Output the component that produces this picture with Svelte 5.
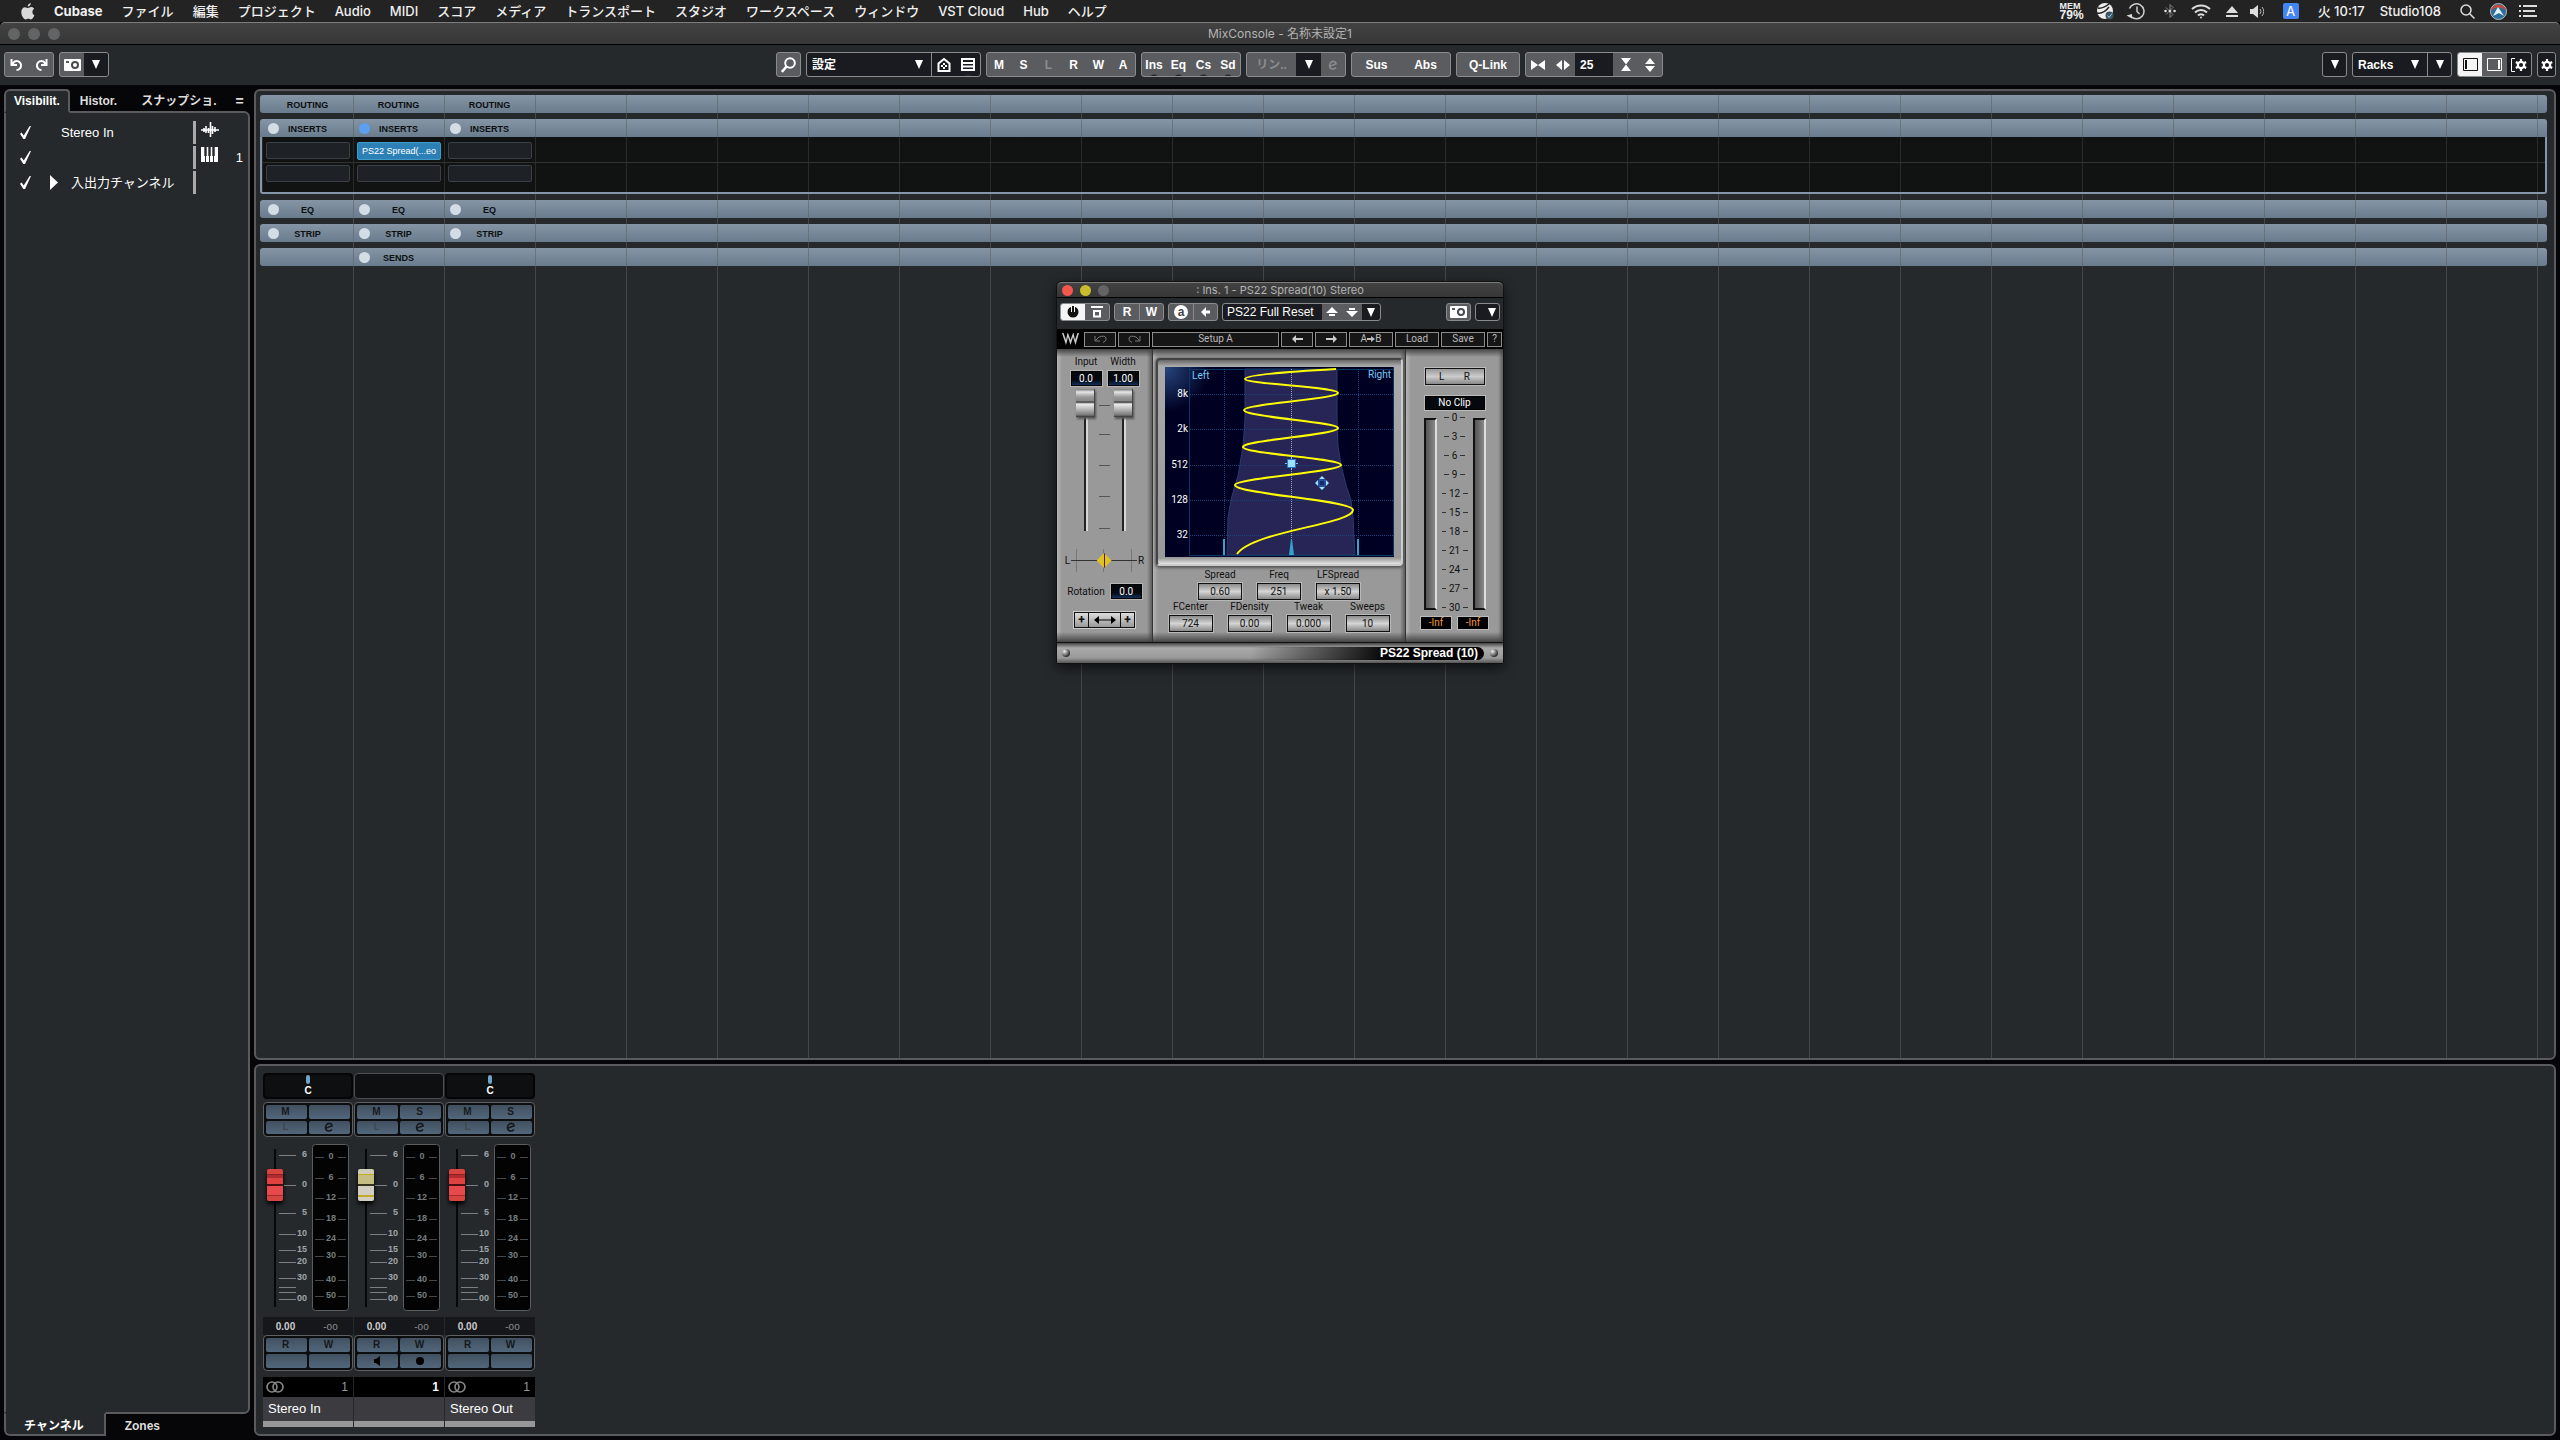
<script>
  const menus = [
    "ファイル", "編集", "プロジェクト", "Audio", "MIDI", "スコア", "メディア", "トランスポート",
    "スタジオ", "ワークスペース", "ウィンドウ", "VST Cloud", "Hub", "ヘルプ",
  ];

  // Rack rows above and below the insert slots
  const inserts = [{ on: false }, { on: true, plugin: "PS22 Spread(...eo" }, { on: false }];
  const racks = [
    { name: "EQ", channels: [0, 1, 2] },
    { name: "STRIP", channels: [0, 1, 2] },
    { name: "SENDS", channels: [1] },
  ];

  const channels = [
    { name: "Stereo In", pan: "C", solo: "", stereo: true, color: "red" },
    { name: "", pan: "", solo: "S", stereo: false, color: "cream", selected: true },
    { name: "Stereo Out", pan: "C", solo: "S", stereo: true, color: "red" },
  ];

  // Scale marks: label and distance from the top of the fader area
  const faderMarks = [["6", 10], ["0", 40], ["5", 68], ["10", 89], ["15", 105], ["20", 117], ["30", 133], ["00", 154]];
  const meterMarks = [["0", 12], ["6", 33], ["12", 53], ["18", 74], ["24", 94], ["30", 111], ["40", 135], ["50", 151]];
  const clipMarks = [0, 3, 6, 9, 12, 15, 18, 21, 24, 27, 30];

  const topParams = [["Spread", "0.60"], ["Freq", "251"], ["LFSpread", "x 1.50"]];
  const bottomParams = [["FCenter", "724"], ["FDensity", "0.00"], ["Tweak", "0.000"], ["Sweeps", "10"]];
  const freqs = [["8k", 27], ["2k", 62], ["512", 98], ["128", 133], ["32", 168]];

  let tab = $state("Visibilit.");
  let zone = $state("チャンネル");
</script>

{#snippet arrow()}
  <svg class="tri" viewBox="0 0 8 9"><path d="M0 0h8L4 9z" /></svg>
{/snippet}

{#snippet camera()}
  <svg width="17" height="12" viewBox="0 0 17 12">
    <rect width="17" height="12" rx="1" fill="#fff" />
    <rect x="2" y="2" width="3" height="2" fill="#5a5b5e" />
    <circle cx="11" cy="6" r="3" fill="none" stroke="#4a4b4e" stroke-width="2" />
  </svg>
{/snippet}

{#snippet gear()}
  <svg width="12" height="12" viewBox="0 0 14 14" fill="none" stroke="#fff">
    <circle cx="7" cy="7" r="3.700" stroke-width="2.600" />
    <path d="M7 0v3M7 11v3M1 3.500l2.500 1.500M10.500 9l2.500 1.500M1 10.500L3.500 9M10.500 5L13 3.500" stroke-width="2.600" />
  </svg>
{/snippet}

{#snippet edit()}
  <svg width="10" height="10" viewBox="0 0 11 11" fill="none" stroke="currentColor" stroke-width="1.700">
    <path d="M1.500 7L9 4.200C8.600 1 4.500.5 2.500 3.500S2 10 5 10c1.600 0 2.800-.6 3.800-1.800" />
  </svg>
{/snippet}

<div class="app">
  <header class="menubar">
    <button class="apple" aria-label="Apple">
      <svg width="14" height="17" viewBox="0 0 14 17" fill="#d8d8d8">
        <path d="M9.800 0c.1 1.800-1.400 3.500-3.100 3.500C6.500 1.800 8.200.2 9.800 0zM13.400 12.200c-.7 1.900-2 4.200-3.500 4.200-1 0-1.400-.6-2.600-.6s-1.700.6-2.600.6C2.700 16.400.3 12.500.3 9c0-3.100 1.900-4.800 3.800-4.800 1.200 0 2.100.8 2.900.8s1.800-.9 3.300-.9c1 0 2.200.6 2.900 1.600-2.600 1.600-2.200 5.300.2 6.500z" />
      </svg>
    </button>
    <button class="strong">Cubase</button>
    {#each menus as menu}
      <button>{menu}</button>
    {/each}
    <div class="status">
      <span class="mem"><small>MEM</small><b>79%</b></span>
      <svg width="18" height="18" viewBox="0 0 18 18">
        <circle cx="9" cy="9" r="8" fill="#eee" />
        <path d="M2 6c4 1 7-1 11-4M1 11c5 1 9-2 12-6" stroke="#222" stroke-width="1.500" fill="none" />
        <circle cx="13.500" cy="13.500" r="4" fill="#3b5361" />
        <path d="M11.500 13.500l1.500 2 3-4" stroke="#9fd0e8" fill="none" />
      </svg>
      <svg width="19" height="18" viewBox="0 0 19 18" fill="none" stroke="#cfcfcf" stroke-width="1.500">
        <path d="M3.500 6.500A7.500 7.500 0 1 1 5 14.500M11 4.500v5l2.500 2.500" />
        <path d="M.5 13.500l5.500-1.500v4.500z" fill="#ddd" stroke="none" />
      </svg>
      <svg class="gap-l" width="12" height="16" viewBox="0 0 12 16" fill="none" stroke="#888">
        <path d="M2 4.500l7 7L6 14.500v-13l3 3-7 7" />
        <g fill="#ddd" stroke="none"><circle cx="1.500" cy="8" r="1.300" /><circle cx="6" cy="8" r="1.300" /><circle cx="10.500" cy="8" r="1.300" /></g>
      </svg>
      <svg class="gap-m" width="20" height="15" viewBox="0 0 20 15" fill="none" stroke="#ddd" stroke-width="2">
        <path d="M1 5a13 13 0 0 1 18 0M4 8.500a8.500 8.500 0 0 1 12 0M7 11.500a4 4 0 0 1 6 0" />
        <circle cx="10" cy="13.500" r="1" fill="#ddd" stroke="none" />
      </svg>
      <svg class="gap-m" width="12" height="11" viewBox="0 0 12 11" fill="#ddd"><path d="M6 0l6 7H0zM0 9h12v2H0z" /></svg>
      <svg width="14" height="13" viewBox="0 0 14 13" fill="#ddd">
        <path d="M0 4h3l5-4v13L3 9H0z" /><path d="M10 4q2 2.500 0 5M12 2q3.500 4.500 0 9" fill="none" stroke="#bbb" />
      </svg>
      <span class="ime gap-l">A</span>
      <time class="gap-l">火 10:17</time>
      <span class="gap-m">Studio108</span>
      <svg class="gap-l" width="15" height="15" viewBox="0 0 15 15" fill="none" stroke="#ddd" stroke-width="1.500"><circle cx="6" cy="6" r="5" /><path d="M9.500 9.500l5 5" /></svg>
      <svg class="gap-m" width="17" height="17" viewBox="0 0 17 17">
        <circle cx="8.500" cy="8.500" r="8" fill="#2c6f9c" stroke="#bbb" />
        <path d="M1 7a8 8 0 0 1 15 0q-7-5-15 0z" fill="#c4473f" />
        <path d="M3 13l5-9 6 9-5-3z" fill="#e6f4fa" />
      </svg>
      <svg width="18" height="12" viewBox="0 0 18 12" stroke="#ddd" stroke-width="2"><path d="M0 1h2M4 1h14M0 6h2M4 6h12M0 11h2M4 11h14" /></svg>
    </div>
  </header>

  <div class="titlebar">
    <div class="dots"><i></i><i></i><i></i></div>
    <span>MixConsole - 名称未設定1</span>
  </div>

  <div class="toolbar">
    <div class="tools left">
      <div class="group">
        <button aria-label="Undo"><svg width="14" height="14" viewBox="0 0 14 14" fill="none" stroke="#fff" stroke-width="2"><path d="M1.500 1v6H7M2 6.500l2.500-3a4.500 4.500 0 1 1 2 8.500" /></svg></button>
        <button aria-label="Redo"><svg width="14" height="14" viewBox="0 0 14 14" fill="none" stroke="#fff" stroke-width="2"><path d="M12.500 1v6H7M12 6.500l-2.500-3a4.500 4.500 0 1 0-2 8.500" /></svg></button>
      </div>
      <div class="group">
        <button aria-label="Snapshot">{@render camera()}</button>
        <button class="dark" aria-label="Snapshots">{@render arrow()}</button>
      </div>
    </div>

    <div class="tools center">
      <div class="group">
        <button aria-label="Find"><svg width="15" height="16" viewBox="0 0 15 16" fill="none" stroke="#fff" stroke-width="2"><circle cx="9" cy="6" r="4.800" /><path d="M5.500 9.500L.8 15" stroke-width="2.600" /></svg></button>
      </div>
      <div class="group dark">
        <label class="select config">
          <select aria-label="設定"><option>設定</option></select>
          {@render arrow()}
        </label>
        <button class="divided" aria-label="Home"><svg width="14" height="14" viewBox="0 0 14 14" fill="none" stroke="#fff" stroke-width="2"><path d="M1.500 13V5.500L7 1l5.500 4.500V13z" /><path d="M4 8h2M8 8h2M6 6h2M6 10h2" /></svg></button>
        <button class="notch" aria-label="Functions"><svg width="14" height="13" viewBox="0 0 14 13" fill="none" stroke="#fff" stroke-width="2"><path d="M1 1h12v11H1zM1 5h12M1 8.500h12" /></svg></button>
      </div>
      <div class="group">
        {#each "MSLRWA" as letter}
          <button class:dim={letter === "L"}>{letter}</button>
        {/each}
      </div>
      <div class="group">
        {#each ["Ins", "Eq", "Cs", "Sd"] as section}
          <button class="notch">{section}</button>
        {/each}
      </div>
      <div class="group">
        <button class="wide dim">リン..</button>
        <button class="dark" aria-label="Link options">{@render arrow()}</button>
        <button class="dim" aria-label="Edit link">{@render edit()}</button>
      </div>
      <div class="group">
        <button class="wide">Sus</button>
        <button class="wide">Abs</button>
      </div>
      <div class="group"><button class="qlink">Q-Link</button></div>
      <div class="group">
        <button aria-label="Narrower"><svg width="14" height="10" viewBox="0 0 14 10" fill="#fff"><path d="M0 0l7 5-7 5zM14 0L7 5l7 5z" /></svg></button>
        <button aria-label="Wider"><svg width="14" height="10" viewBox="0 0 14 10" fill="#fff"><path d="M6 0v10L0 5zM8 0v10l6-5z" /></svg></button>
        <input class="width" aria-label="Channel width" value="25" />
        <button aria-label="Lower"><svg width="10" height="13" viewBox="0 0 10 13" fill="#fff"><path d="M0 0h10L5 6.500zM0 13h10L5 6.500z" /></svg></button>
        <button aria-label="Higher"><svg width="10" height="14" viewBox="0 0 10 14" fill="#fff"><path d="M0 6h10L5 0zM0 8h10l-5 6z" /></svg></button>
      </div>
    </div>

    <div class="tools">
      <div class="group dark"><button aria-label="Options">{@render arrow()}</button></div>
      <div class="group dark">
        <label class="select racks-select">
          <select aria-label="Racks"><option>Racks</option></select>
          {@render arrow()}
        </label>
        <button class="divided" aria-label="Rack options">{@render arrow()}</button>
      </div>
      <div class="group dark">
        <button class="lit" aria-label="Left zone"><svg width="15" height="13" viewBox="0 0 15 13" fill="none" stroke="#111"><path d="M.5.500h14v12H.5z" /><path d="M3 2v9" stroke-width="2" /></svg></button>
        <button class="grey" aria-label="Right zone"><svg width="15" height="13" viewBox="0 0 15 13" fill="none" stroke="#fff"><path d="M.5.500h14v12H.5z" /><path d="M12 2v9" stroke-width="2" /></svg></button>
        <button aria-label="Layout"><svg width="4" height="14" viewBox="0 0 4 14" fill="none" stroke="#fff"><path d="M4 .5H.5v13H4" /></svg>{@render gear()}</button>
      </div>
      <div class="group dark"><button class="slim" aria-label="Setup">{@render gear()}</button></div>
    </div>
  </div>

  <main>
    <aside>
      <div class="tabs">
        {#each ["Visibilit.", "Histor.", "スナップショ."] as name}
          <button class:active={tab === name} onclick={() => (tab = name)}>{name}</button>
        {/each}
        <button class="more" aria-label="Tabs">=</button>
      </div>
      <ul class="visibility">
        <li>
          <input type="checkbox" id="vis-1" checked />
          <label for="vis-1">Stereo In</label>
          <span class="kind"><svg width="18" height="15" viewBox="0 0 18 15" stroke="#fff" stroke-width="1.600"><path d="M0 8h18M3 6v4M5 4v7M7.500 6v5M9.500 0v15M11.500 4v8M14 5v5" /></svg></span>
        </li>
        <li>
          <input type="checkbox" id="vis-2" checked />
          <label for="vis-2" aria-label="Instrument 1"></label>
          <span class="kind"><svg width="17" height="15" viewBox="0 0 17 15"><path d="M0 0h17v15H0z" fill="#fff" /><path d="M4.500 8v7M8.500 8v7M12.500 8v7" stroke="#25292b" /><path d="M4.500 0v9M8.500 0v9M12.500 0v9" stroke="#25292b" stroke-width="2.400" /></svg></span>
          <span class="num">1</span>
        </li>
        <li>
          <input type="checkbox" id="vis-3" checked />
          <svg class="fold" width="8" height="15" viewBox="0 0 8 15" fill="#fff"><path d="M0 0l8 7.500L0 15z" /></svg>
          <label class="folder" for="vis-3">入出力チャンネル</label>
          <span class="kind"></span>
        </li>
      </ul>
      <div class="tabs bottom">
        {#each ["チャンネル", "Zones"] as name}
          <button class:active={zone === name} onclick={() => (zone = name)}>{name}</button>
        {/each}
      </div>
    </aside>

    <div class="content">
      <section class="panel rack">
        <div class="rows">
          <div class="bar">
            {#each channels as _}
              <div class="head"><span>ROUTING</span></div>
            {/each}
          </div>
          <div class="inserts">
            <div class="bar">
              {#each inserts as insert}
                <div class="head"><button class="led" class:on={insert.on} aria-label="Bypass inserts"></button><span>INSERTS</span></div>
              {/each}
            </div>
            <div class="slots">
              {#each [0, 1] as row}
                <div class="slot-row">
                  {#each inserts as insert}
                    <div class="cell">
                      {#if row === 0 && insert.plugin}
                        <button class="slot loaded">{insert.plugin}</button>
                      {:else}
                        <button class="slot" aria-label="Empty slot"></button>
                      {/if}
                    </div>
                  {/each}
                </div>
              {/each}
            </div>
          </div>
          {#each racks as rack}
            <div class="bar">
              {#each [0, 1, 2] as i}
                <div class="head">
                  {#if rack.channels.includes(i)}
                    <button class="led" aria-label="Bypass {rack.name}"></button><span>{rack.name}</span>
                  {/if}
                </div>
              {/each}
            </div>
          {/each}
        </div>
      </section>

      <section class="panel mixer">
        {#each channels as ch}
          <div class="strip">
            <div class="pan" class:empty={!ch.pan}>
              {#if ch.pan}<i></i><b>{ch.pan}</b>{/if}
            </div>
            <div class="pads">
              <button>M</button>
              <button aria-label="Solo">{ch.solo}</button>
              <button class="off">L</button>
              <button aria-label="Edit">{@render edit()}</button>
            </div>
            <div class="fader-area">
              <input type="range" class="fader {ch.color}" min="0" max="126" value="106" aria-label="Volume {ch.name}" />
              <svg class="scale" width="28" height="167" viewBox="0 0 28 167">
                {#each faderMarks as [label, y]}
                  <path d="M{label === '0' ? 5 : 0} {y + 1.5}h{label === '0' ? 12 : 17}" />
                  <text x="28" y={y + 3} text-anchor="end">{label}</text>
                {/each}
                <path d="M0 143.500h17M0 148.500h17" />
              </svg>
              <svg class="meter" width="37" height="167" viewBox="0 0 37 167">
                <rect x=".5" y=".5" width="36" height="166" rx="3" />
                {#each meterMarks as [label, y]}
                  <path d="M3 {y + 1.5}h9M26 {y + 1.5}h8" />
                  <text x="19" y={y + 3} text-anchor="middle">{label}</text>
                {/each}
              </svg>
            </div>
            <div class="levels"><b>0.00</b><span>-oo</span></div>
            <div class="pads">
              <button>R</button>
              <button>W</button>
              <button aria-label="Monitor">
                {#if ch.selected}<svg width="6" height="10" viewBox="0 0 6 10"><path d="M0 3h2l4-3v10L2 7H0z" /></svg>{/if}
              </button>
              <button aria-label="Record">
                {#if ch.selected}<svg width="8" height="8" viewBox="0 0 8 8"><circle cx="4" cy="4" r="4" /></svg>{/if}
              </button>
            </div>
            <div class="index" class:selected={ch.selected}>
              {#if ch.stereo}
                <svg width="18" height="12" viewBox="0 0 18 12" fill="none" stroke="#888" stroke-width="1.600"><circle cx="6" cy="6" r="5" /><circle cx="12" cy="6" r="5" /></svg>
              {/if}
              <span>1</span>
            </div>
            <div class="name">{ch.name}</div>
          </div>
        {/each}
      </section>
    </div>
  </main>

  <!-- Floating plug-in window -->
  <section class="plugin">
    <div class="titlebar small">
      <div class="dots"><i class="close"></i><i class="min"></i><i></i></div>
      <span>: Ins. 1 - PS22 Spread(10) Stereo</span>
    </div>
    <div class="host">
      <div class="group">
        <button class="lit" aria-label="Power"><svg width="12" height="12" viewBox="0 0 12 12"><circle cx="6" cy="6" r="5.500" fill="#111" /><path d="M6 0v6" stroke="#fff" stroke-width="4" /><path d="M6 0v6" stroke="#111" stroke-width="2" /></svg></button>
        <button aria-label="Bypass"><svg width="12" height="12" viewBox="0 0 12 12" fill="none" stroke="#fff" stroke-width="2"><path d="M0 1h12M3 5h6v5.500H3z" /></svg></button>
      </div>
      <div class="group split"><button>R</button><button>W</button></div>
      <div class="group split">
        <button aria-label="A/B"><svg width="14" height="14" viewBox="0 0 14 14"><circle cx="7" cy="7" r="7" fill="#fff" /><text x="7" y="11" text-anchor="middle" class="ab">a</text></svg></button>
        <button aria-label="Copy"><svg width="10" height="10" viewBox="0 0 10 10" fill="#fff"><path d="M0 5l5-5v3.500h4v3H5V10z" /></svg></button>
      </div>
      <div class="group dark">
        <input class="preset" aria-label="Preset" value="PS22 Full Reset" />
        <button class="step" aria-label="Previous preset"><svg width="12" height="10" viewBox="0 0 12 10" fill="#fff"><path d="M6 0l6 6H0zM3 7h6v2H3z" /></svg></button>
        <button class="step" aria-label="Next preset"><svg width="12" height="10" viewBox="0 0 12 10" fill="#fff"><path d="M6 10l6-6H0zM3 1h6v2H3z" /></svg></button>
        <button class="open" aria-label="Presets">{@render arrow()}</button>
      </div>
      <div class="group end"><button aria-label="Snapshot">{@render camera()}</button></div>
      <div class="group dark last"><button aria-label="Options">{@render arrow()}</button></div>
    </div>

    <div class="waves">
      <svg width="17" height="12" viewBox="0 0 17 12" fill="#ccc"><path d="M0 0h1.500L4 7 5.500 0h.5L8.500 7 11 0h.5L13 7 15.500 0H17L13.500 12 11 4 8.500 12 6 4 4 12z" /></svg>
      <button class="icon" aria-label="Undo"><svg width="13" height="8" viewBox="0 0 13 8" fill="none" stroke="#777"><path d="M1 1v5h5M1.500 5.500L5 2q6-2 7 1t-3 4.500" /></svg></button>
      <button class="icon" aria-label="Redo"><svg width="13" height="8" viewBox="0 0 13 8" fill="none" stroke="#777"><path d="M12 1v5H7M11.500 5.500L8 2Q2 0 1 3t3 4.500" /></svg></button>
      <button class="setup">Setup A</button>
      <button class="icon" aria-label="Previous"><svg width="11" height="8" viewBox="0 0 11 8" fill="#ccc"><path d="M0 4l4-4v3h7v2H4v3z" /></svg></button>
      <button class="icon" aria-label="Next"><svg width="11" height="8" viewBox="0 0 11 8" fill="#ccc"><path d="M11 4L7 0v3H0v2h7v3z" /></svg></button>
      <button class="cmd" aria-label="A to B">A<svg width="8" height="6" viewBox="0 0 8 6" fill="#bbb"><path d="M8 3L4 0v2H0v2h4v2z" /></svg>B</button>
      <button class="cmd">Load</button>
      <button class="cmd">Save</button>
      <button class="help">?</button>
    </div>

    <div class="body">
      <div class="col input-col">
        <div class="duo">
          <label class="field">Input<input class="lcd" value="0.0" /></label>
          <label class="field">Width<input class="lcd" value="1.00" /></label>
        </div>
        <div class="sliders">
          <input type="range" class="gain" min="0" max="100" value="100" aria-label="Input level" />
          <svg width="11" height="142" viewBox="0 0 11 142" stroke="#555"><path d="M0 16.500h11M0 45.500h11M0 76.500h11M0 107.500h11M0 139.500h11" /></svg>
          <input type="range" class="gain" min="0" max="100" value="100" aria-label="Width level" />
        </div>
        <div class="rotate"><span>L</span><input type="range" aria-label="Rotation" /><span>R</span></div>
        <label class="rotation">Rotation<input class="lcd" value="0.0" /></label>
        <div class="nudge">
          <button>+</button><button class="both" aria-label="Both"><svg width="22" height="8" viewBox="0 0 22 8"><path d="M0 4l5-4v3.500h12V0l5 4-5 4V4.500H5V8z" /></svg></button><button>+</button>
        </div>
      </div>

      <div class="col graph-col">
        <div class="bezel">
          <svg class="screen" viewBox="0 0 229 190">
            <defs>
              <radialGradient id="glow" cx="0" cy="0" r="45" gradientUnits="userSpaceOnUse">
                <stop offset="0" stop-color="#27477e" /><stop offset="1" stop-color="#000022" />
              </radialGradient>
            </defs>
            <path d="M0 0h229v190H0z" fill="url(#glow)" />
            <path d="M80 2V52L78 79 73 109 70 118 66 133 63 151 62 188H190L188 151 186 133 181 118 176 98 173 79 172 52V2z" fill="#262555" stroke="#2c3c6c" />
            <path d="M24.500 0V188.500H228.500V0M24.500 2.500H228" fill="none" stroke="#093767" />
            <path d="M59.500 2V188M193.500 2V188M25 27.500H228M25 62.500H228M25 98.500H228M25 133.500H228M25 168.500H228" stroke="#174578" stroke-dasharray="1 1" />
            <path d="M126.500 2V188" stroke="#9aa5b5" stroke-dasharray="1 1" />
            <path d="M58 172h2v16h-2zM192 172h2v16h-2zM126 172h1l2 16h-5z" fill="#35a3cc" />
            <path d="M171 2C120 5 80 8 80 12C80 17 173 20 173 26C173 32 79 37 79 43C79 50 173 55 173 61C173 68 78 73 78 80C78 87 176 91 176 98C176 105 70 111 70 118C70 127 188 133 188 143C188 157 88 164 72 187" fill="none" stroke="#ffff00" stroke-width="2" />
            <path d="M126.500 90v13M120 96.500h13" stroke="#79c9f5" /><rect x="122.500" y="92.500" width="8" height="8" fill="#9be1ff" stroke="#2a70d0" />
            <path d="M157 109l-3 3h6zM157 123l-3-3h6zM150 116l3-3v6zM164 116l-3-3v6z" fill="#9be1ff" /><rect x="154" y="113" width="6" height="6" fill="#172a68" stroke="#2a70d0" />
            <g class="freq">
              {#each freqs as [label, y]}
                <text x="23" y={y + 3} text-anchor="end">{label}</text>
              {/each}
            </g>
            <text class="side" x="27" y="12">Left</text>
            <text class="side" x="226" y="11" text-anchor="end">Right</text>
          </svg>
        </div>
        {#each [topParams, bottomParams] as row}
          <div class="params">
            {#each row as [label, value]}
              <label class="field">{label}<input class="knob" {value} /></label>
            {/each}
          </div>
        {/each}
      </div>

      <div class="col meter-col">
        <button class="lr"><span>L</span><span>R</span></button>
        <button class="clip">No Clip</button>
        <div class="out">
          <i></i>
          <ol>
            {#each clipMarks as mark}
              <li>{mark}</li>
            {/each}
          </ol>
          <i></i>
        </div>
        <div class="peaks"><output>-Inf</output><output>-Inf</output></div>
      </div>
    </div>

    <footer><i class="screw"></i><strong>PS22 Spread (10)</strong><i class="screw"></i></footer>
  </section>
</div>

<style>
  :global(body) {
    margin: 0;
    background: #060608;
  }

  * {
    box-sizing: border-box;
  }

  .app {
    position: relative;
    display: flex;
    flex-direction: column;
    min-height: 100vh;
    background: #060608;
    color: #fff;
    font: 12px/16px "Liberation Sans", "Noto Sans CJK JP", sans-serif;
  }

  button,
  input,
  select {
    margin: 0;
    padding: 0;
    border: 0;
    border-radius: 0;
    background: none;
    color: inherit;
    font: inherit;
    appearance: none;
    outline: none;
  }

  button {
    display: flex;
    align-items: center;
    justify-content: center;
    white-space: nowrap;
  }

  svg {
    display: block;
    flex: none;
  }

  /* macOS menu bar */
  .menubar {
    display: flex;
    align-items: center;
    height: 22px;
    padding: 0 23px 0 21px;
    gap: 19px;
    background: #232323;
    font: 500 13px/22px Inter, "Noto Sans CJK JP", sans-serif;
    color: #f0f0f0;
  }

  .strong {
    font-weight: 700;
  }

  .status {
    display: flex;
    align-items: center;
    gap: 12px;
    margin-left: auto;
  }

  .mem {
    display: flex;
    flex-direction: column;
    font: 700 12px/10px "Liberation Sans", sans-serif;
  }

  .mem small {
    font-size: 9px;
    line-height: 8px;
  }

  .gap-m {
    margin-left: 3px;
  }

  .gap-l {
    margin-left: 7px;
  }

  .ime {
    width: 16px;
    border-radius: 2px;
    background: #4285f4;
    line-height: 16px;
    text-align: center;
  }

  /* Window title */
  .titlebar {
    display: flex;
    align-items: center;
    justify-content: center;
    position: relative;
    height: 23px;
    border-top: 1px solid #7c7c7c;
    border-bottom: 1px solid #000;
    border-radius: 5px 5px 0 0;
    background: linear-gradient(#424242, #373737);
    color: #b4b4b4;
    font: 12px/22px Inter, "Noto Sans CJK JP", sans-serif;
  }

  .dots {
    position: absolute;
    left: 8px;
    display: flex;
    gap: 8px;
  }

  .dots i {
    width: 12px;
    height: 12px;
    border-radius: 50%;
    background: #636465;
  }

  /* Toolbar */
  .toolbar {
    display: flex;
    align-items: center;
    height: 40px;
    margin-bottom: 4px;
    padding: 0 4px 1px;
    background: #25292b;
    font-weight: 700;
  }

  .tools {
    display: flex;
    gap: 5px;
  }

  .left {
    padding-right: 8px;
  }

  .center {
    margin: 0 auto;
  }

  .group {
    display: flex;
    height: 25px;
    overflow: hidden;
    border: 1px solid #8a8b8d;
    border-radius: 3px;
    background: #5b5c60;
  }

  .group button {
    width: 25px;
    margin: -1px 0;
  }

  .group button:first-child,
  .group button:last-child {
    width: 24px;
  }

  .group button:only-child {
    width: 23px;
  }

  .group.dark,
  .group .dark {
    background: #1a1b20;
  }

  .group button.wide {
    width: 49px;
  }

  .group button.qlink {
    width: 62px;
  }

  .group button.slim {
    width: 17px;
  }

  .dim {
    color: #8b8c8e;
  }

  .tri {
    width: 8px;
    height: 9px;
    fill: #fff;
  }

  .select {
    display: flex;
    align-items: center;
    gap: 8px;
    padding: 0 8px 0 5px;
  }

  .config {
    width: 124px;
  }

  .racks-select {
    width: 74px;
  }

  .select select {
    flex: 1;
    min-width: 0;
  }

  .group .divided {
    border-left: 1px solid #8a8b8d;
  }

  .notch {
    background: radial-gradient(circle at 50% 27px, #25292b 4px, transparent 5px);
  }

  .width {
    width: 38px;
    padding-left: 5px;
    background: #1a1b20;
  }

  .group .lit {
    background: #f4f4f4;
  }

  .group .grey {
    background: #5b5c60;
  }

  /* Workspace */
  main {
    display: flex;
    flex: 1;
    padding: 0 4px 4px;
  }

  aside {
    display: flex;
    flex-direction: column;
    width: 246px;
    margin-right: 4px;
  }

  .tabs {
    display: flex;
    height: 24px;
    z-index: 1;
    color: #ddd;
    font-weight: 700;
  }

  .tabs button {
    padding: 0 12px 0 8px;
    border: 2px solid transparent;
  }

  .tabs .active {
    padding: 0 8px;
    border-color: #5b5b5d;
    border-bottom-color: #25292b;
    border-radius: 6px 4px 0 0;
    background: #25292b;
    color: #fff;
  }

  .tabs .more {
    padding: 0 4px 0 3px;
    font-size: 14px;
  }

  .tabs.bottom button {
    padding: 4px 17px 0;
  }

  .tabs.bottom .active {
    padding: 4px 20px 0 18px;
    border-color: #5b5b5d;
    border-top-color: #25292b;
    border-radius: 0 0 0 6px;
  }

  .visibility {
    flex: 1;
    margin: -2px 0;
    padding: 7px 0;
    border: 2px solid #5b5b5d;
    border-radius: 0 6px 6px 0;
    background: #25292b;
    list-style: none;
    font-size: 13px;
  }

  .visibility li {
    display: flex;
    align-items: center;
    height: 25px;
    padding: 0 5px 0 14px;
  }

  .visibility input {
    width: 11px;
    height: 13px;
    background: #fff;
    clip-path: polygon(0 60%, 14% 50%, 34% 74%, 88% 0, 100% 0, 46% 100%, 30% 100%);
  }

  .visibility label {
    width: 132px;
    margin-right: auto;
    padding-left: 30px;
  }

  .visibility .fold {
    margin-left: 19px;
  }

  .visibility .folder {
    width: 130px;
    padding-left: 13px;
  }

  .kind {
    display: flex;
    width: 35px;
    height: 23px;
    padding: 1px 0 0 5px;
    border-left: 3px solid #aaa;
  }

  .num {
    width: 15px;
    text-align: right;
  }

  .kind:last-child {
    margin-right: 15px;
  }

  .content {
    display: flex;
    flex: 1;
    flex-direction: column;
    gap: 4px;
    min-width: 0;
  }

  .panel {
    border: 2px solid #5b5b5d;
    border-radius: 6px;
    background: #25292b;
  }

  .rack {
    display: flex;
    flex: 1;
    padding: 4px 7px 0 4px;
  }

  .rows {
    position: relative;
    display: flex;
    flex: 1;
    flex-direction: column;
    gap: 6px;
  }

  /* Channel separators run over all the racks */
  .rows::after {
    content: "";
    position: absolute;
    inset: 0 0 0 93px;
    background: linear-gradient(to right, rgba(95, 95, 95, 0.55) 1px, transparent 1px) 0 0 / 91px 100%;
    pointer-events: none;
  }

  .bar {
    display: flex;
    height: 18px;
    padding-left: 2px;
    border-radius: 3px;
    background: linear-gradient(#8595a5, #697c8d);
    color: #0c0e10;
    font: 700 9px/20px "Liberation Sans", sans-serif;
  }

  .head {
    display: flex;
    align-items: center;
    width: 91px;
    padding-left: 6px;
  }

  .head span {
    flex: 1;
    padding: 1px 17px 0 0;
    text-align: center;
  }

  .head span:only-child {
    padding-right: 6px;
  }

  .led {
    width: 11px;
    height: 11px;
    border-radius: 50%;
    background: #d3dde6;
  }

  .led.on {
    background: #5b9fee;
  }

  .inserts .bar {
    border-radius: 3px 3px 0 0;
  }

  .slots {
    position: relative;
    z-index: 1;
    height: 57px;
    padding-top: 2px;
    border: 2px solid #8496a8;
    border-top: 0;
    border-radius: 0 0 3px 3px;
    background: linear-gradient(to right, #292b2b 1px, transparent 1px) 91px 0 / 91px 100%, #111312;
  }

  .slot-row {
    display: flex;
    height: 24px;
    padding-top: 3px;
    border-bottom: 1px solid #303232;
  }

  .slot-row:last-child {
    padding-top: 2px;
    border: 0;
  }

  .cell {
    width: 91px;
    padding: 0 3px 0 4px;
  }

  .slot {
    width: 84px;
    height: 17px;
    border: 1px solid #3b4046;
    border-radius: 2px;
    background: #1e2226;
    font-size: 9px;
  }

  .loaded {
    height: 18px;
    border-color: #3c9ccc;
    background: #2d80b6;
  }

  /* Mixer strips */
  .mixer {
    display: flex;
    gap: 1px;
    padding: 7px;
  }

  .strip {
    width: 90px;
  }

  .pan {
    display: flex;
    flex-direction: column;
    align-items: center;
    height: 26px;
    border: 2px solid #050505;
    border-radius: 4px;
    background: #0d0f10;
    font: 700 10px/13px "Liberation Sans", sans-serif;
  }

  .pan i {
    width: 4px;
    height: 10px;
    border-radius: 2px;
    background: #6fa3c8;
  }

  .pan.empty {
    border: 1px solid #4c4e50;
  }

  .pads {
    display: grid;
    grid-template: 1fr 1fr / 1fr 1fr;
    gap: 2px;
    height: 35px;
    margin: 3px 0 7px;
    padding: 2px;
    border: 1px solid #5e6062;
    border-radius: 4px;
    background: #0b0d0f;
    color: #15181c;
    font: 700 10px/14px "Liberation Sans", sans-serif;
  }

  .pads button {
    min-height: 0;
    padding-right: 2px;
    border-radius: 2px;
    background: linear-gradient(#41505f, #52677c);
  }

  .pads .off {
    color: #3f4850;
  }

  .fader-area {
    display: flex;
    height: 167px;
  }

  .fader {
    width: 16px;
    height: 158px;
    margin: 5px 0 0 4px;
    writing-mode: vertical-lr;
    direction: rtl;
    background: linear-gradient(to right, transparent 7px, #060708 7px 9px, transparent 9px);
  }

  .fader::-webkit-slider-thumb {
    appearance: none;
    width: 16px;
    height: 32px;
    border-radius: 2px;
    background: linear-gradient(#d8453f 0 5px, #8f1f22 5px 6px, #b02c2e 6px 9px, #e0433f 9px 15px, #4a1012 15px 17px, #e8494a 17px 26px, #a3292b 26px 27px, #d8453f 27px);
    box-shadow: 0 3px 4px #000;
  }

  .fader.cream::-webkit-slider-thumb {
    background: linear-gradient(#cfccb8 0 5px, #c2ad28 5px 6px, #c6bd83 6px 15px, #35321e 15px 17px, #d2cfc2 17px 26px, #c7a92b 26px 28px, #d2cfc2 28px);
  }

  /* The scale starts under the fader cap */
  .scale {
    margin-left: -4px;
    margin-right: 5px;
    stroke: #7c8084;
    pointer-events: none;
  }

  .scale text,
  .meter text {
    fill: #a0a5aa;
    stroke: none;
    font: 700 9px "Liberation Sans", sans-serif;
  }

  .meter {
    stroke: #45484a;
  }

  .meter rect {
    fill: #030303;
    stroke: #5b5d5f;
  }

  .meter text {
    fill: #777c80;
  }

  .levels {
    display: flex;
    height: 18px;
    margin-top: 6px;
    background: #16171b;
    color: #ccc;
    font-size: 10px;
    line-height: 20px;
    text-align: center;
  }

  .levels b,
  .levels span {
    width: 45px;
  }

  .levels span {
    color: #8a8d90;
  }

  .levels + .pads {
    height: 36px;
    margin: 0 0 6px;
  }

  .index {
    display: flex;
    align-items: center;
    height: 20px;
    padding: 0 5px 0 3px;
    background: #000;
    color: #999;
  }

  .index span {
    margin-left: auto;
  }

  .index.selected {
    color: #fff;
    font-weight: 700;
  }

  .name {
    height: 30px;
    padding-left: 5px;
    border-bottom: 6px solid #989798;
    background: #3b3b40;
    font-size: 13px;
    line-height: 23px;
  }

  /* Plug-in window */
  .plugin {
    position: absolute;
    top: 281px;
    left: 1056px;
    z-index: 2;
    width: 448px;
    border: 1px solid #111;
    border-radius: 5px 5px 2px 2px;
    background: #25292b;
    box-shadow: 0 4px 12px rgba(0, 0, 0, 0.6);
    color: #111;
    font: 10px/12px Roboto, "Noto Sans", sans-serif;
  }

  .titlebar.small {
    height: 16px;
    font-size: 11px;
    line-height: 14px;
  }

  .small .dots {
    left: 5px;
    gap: 7px;
  }

  .small .dots i {
    width: 11px;
    height: 11px;
  }

  .small .dots .close {
    background: #f2564d;
  }

  .small .dots .min {
    background: #c9bb2a;
  }

  .host {
    display: flex;
    gap: 4px;
    height: 31px;
    padding: 5px 3px 0;
    color: #fff;
    font: 700 12px/16px "Liberation Sans", sans-serif;
  }

  .host .group {
    height: 18px;
  }

  .host .split button + button {
    border-left: 1px solid #8a8b8d;
  }

  .ab {
    fill: #444;
    font: 700 12px "Liberation Sans", sans-serif;
  }

  .preset {
    width: 99px;
    padding-left: 4px;
    font-weight: 400;
  }

  .host .group .step {
    width: 20px;
    background: #5b5c60;
  }

  .host .group button.open {
    width: 18px;
  }

  .host .end {
    margin-left: auto;
  }

  .host .last button {
    padding-left: 8px;
  }

  .waves {
    display: flex;
    align-items: center;
    gap: 2px;
    height: 20px;
    padding: 0 1px 0 5px;
    background: #000;
    color: #bbb;
  }

  .waves button {
    height: 15px;
    border: 1px solid #8c8c8c;
    background: #161616;
  }

  .waves > svg {
    margin-right: 3px;
  }

  .waves .icon {
    width: 32px;
  }

  .waves .setup {
    flex: 1;
  }

  .waves .cmd {
    width: 44px;
  }

  .waves .help {
    width: 15px;
  }

  .body {
    display: flex;
    background: #999;
    border-bottom: 1px solid #111;
  }

  .col {
    display: flex;
    flex-direction: column;
    align-items: center;
    height: 293px;
    background: linear-gradient(#444, transparent 8px, transparent 283px, #444), linear-gradient(to right, #b5b5b5, #999 5px, #999 calc(100% - 5px), #5d5d5d);
  }

  .input-col {
    width: 95px;
    padding-top: 7px;
  }

  .graph-col {
    flex: 1;
    padding-top: 9px;
    border-left: 1px solid #333;
    border-right: 1px solid #333;
  }

  .meter-col {
    width: 97px;
    padding-top: 19px;
  }

  .field {
    display: flex;
    flex-direction: column;
    align-items: center;
    white-space: nowrap;
  }

  .duo {
    display: flex;
    gap: 7px;
  }

  .duo .field {
    width: 30px;
    gap: 3px;
  }

  .lcd {
    width: 31px;
    height: 15px;
    border: 1px solid #000;
    outline: 1px solid #b5b5b5;
    background: linear-gradient(#05080d 60%, #12305c);
    color: #fff;
    text-align: center;
  }

  .sliders {
    display: flex;
    gap: 4px;
    margin-top: 3px;
  }

  .gain {
    width: 19px;
    height: 142px;
    writing-mode: vertical-lr;
    direction: rtl;
    background: linear-gradient(to right, transparent 8px, #222 8px 10px, #d5d5d5 10px 12px, transparent 12px);
  }

  .gain::-webkit-slider-thumb {
    appearance: none;
    width: 19px;
    height: 28px;
    border-right: 1px solid #444;
    background: linear-gradient(#777, #e6e6e6 3px, #999 8px, #888 12px, #333 13px, #eee 15px, #bbb 20px, #777 26px, #333);
    box-shadow: 1px 2px 2px #555;
  }

  .rotate {
    display: flex;
    align-items: center;
    gap: 1px;
    margin-top: 18px;
  }

  .rotate input {
    width: 66px;
    height: 23px;
    background:
      linear-gradient(#333, #333) 0 11px / 100% 1px no-repeat,
      linear-gradient(#777, #777) 5px 0 / 1px 100% no-repeat,
      linear-gradient(#777, #777) 60px 0 / 1px 100% no-repeat,
      linear-gradient(#777, #777) 32px 0 / 1px 100% no-repeat;
  }

  .rotate input::-webkit-slider-thumb {
    appearance: none;
    width: 15px;
    height: 15px;
    background: linear-gradient(to right, #e0c224 7px, #5a1a10 7px 8px, #e0c224 8px);
    clip-path: polygon(50% 0, 100% 50%, 50% 100%, 0 50%);
  }

  .rotation {
    display: flex;
    align-items: center;
    gap: 6px;
    margin-top: 12px;
  }

  .nudge {
    display: flex;
    margin-top: 12px;
    border: 1px solid #ccc;
  }

  .nudge button {
    width: 15px;
    height: 16px;
    border: 1px solid #111;
    background: linear-gradient(#ddd, #999);
    font-size: 12px;
    font-weight: 700;
  }

  .nudge .both {
    width: 31px;
    border-width: 1px 0;
  }

  .bezel {
    padding: 7px;
    margin-bottom: 3px;
    border: 2px solid;
    border-color: #444 #ccc #ccc #444;
    border-radius: 4px;
    background: linear-gradient(#666, #aaa 6px, #999 calc(100% - 6px), #e5e5e5);
    box-shadow: 0 1px 3px 1px #555;
  }

  .screen {
    width: 229px;
    height: 190px;
  }

  .screen text {
    font: 10px Roboto, sans-serif;
  }

  .freq {
    fill: #fff;
  }

  .screen .side {
    fill: #7cc8f4;
  }

  .params {
    display: flex;
    gap: 15px;
    margin-bottom: 1px;
  }

  .params .field {
    width: 44px;
    gap: 2px;
  }

  .knob {
    width: 44px;
    height: 17px;
    border: 1px solid #111;
    outline: 1px solid #b8b8b8;
    background: linear-gradient(#8a8a8a, #d5d5d5 50%, #888);
    text-align: center;
  }

  .lr {
    justify-content: space-around;
    width: 60px;
    height: 17px;
    padding: 0 4px;
    border: 1px solid #111;
    outline: 1px solid #bbb;
    background: linear-gradient(#999, #ccc 50%, #888);
  }

  .clip {
    width: 60px;
    height: 14px;
    margin: 11px 0 8px;
    border: 1px solid #000;
    outline: 1px solid #bbb;
    background: #05080d;
    color: #fff;
  }

  .out {
    display: flex;
    gap: 5px;
  }

  .out i {
    width: 13px;
    height: 192px;
    border: 2px solid #111;
    border-right-color: #ddd;
    background: linear-gradient(to right, #555, #888);
  }

  .out ol {
    display: flex;
    flex-direction: column;
    width: 26px;
    margin: -7px 0 -10px;
    padding: 0;
    list-style: none;
  }

  .out li {
    display: flex;
    align-items: center;
    justify-content: center;
    gap: 3px;
    height: 19px;
    padding-bottom: 6px;
  }

  .out li::before,
  .out li::after {
    content: "";
    width: 5px;
    height: 1px;
    background: #333;
  }

  .peaks {
    display: flex;
    gap: 7px;
    margin-top: 7px;
  }

  .peaks output {
    width: 30px;
    height: 12px;
    outline: 1px solid #bbb;
    background: #000;
    color: #f29a3c;
    text-align: center;
  }

  footer {
    display: flex;
    align-items: center;
    height: 20px;
    padding: 0 5px;
    background: linear-gradient(#444, #aaa 5px, #999 15px, #555);
    color: #fff;
    font: 700 12px/13px "Liberation Sans", sans-serif;
  }

  footer strong {
    flex: 1;
    margin: 0 6px 0 180px;
    padding-right: 6px;
    border-radius: 0 7px 7px 0;
    background: linear-gradient(to right, transparent, #000 60%);
    text-align: right;
  }

  .screw {
    width: 8px;
    height: 8px;
    border-radius: 50%;
    background: radial-gradient(circle at 30% 30%, #eee, #333 70%);
  }
</style>
